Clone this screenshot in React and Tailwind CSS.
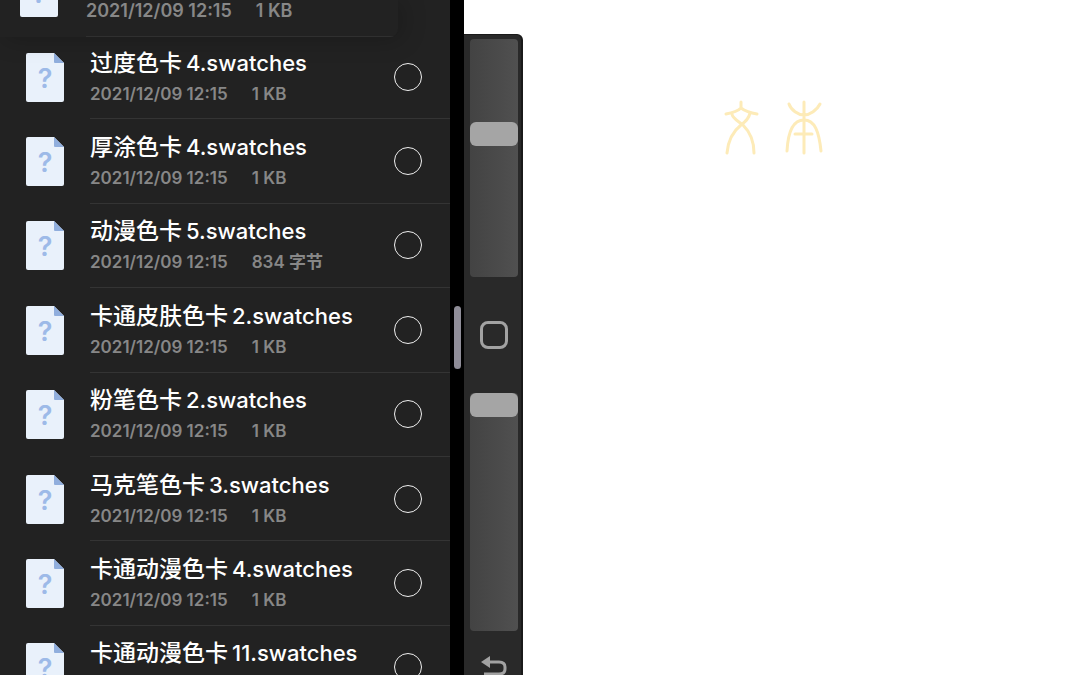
import React, { useState } from 'react'

const files = [
    { id: 1, name: '过度色卡', rest: '4.swatches', size: '1 KB' },
    { id: 2, name: '厚涂色卡', rest: '4.swatches', size: '1 KB' },
    { id: 3, name: '动漫色卡', rest: '5.swatches', size: '834 字节' },
    { id: 4, name: '卡通皮肤色卡', rest: '2.swatches', size: '1 KB' },
    { id: 5, name: '粉笔色卡', rest: '2.swatches', size: '1 KB' },
    { id: 6, name: '马克笔色卡', rest: '3.swatches', size: '1 KB' },
    { id: 7, name: '卡通动漫色卡', rest: '4.swatches', size: '1 KB' },
    { id: 8, name: '卡通动漫色卡', rest: '11.swatches', size: '1 KB' },
]

const FileIcon = () => (
    <div className="relative grid h-[49px] w-[38px] shrink-0 place-items-center">
        <svg viewBox="0 0 38 49" className="absolute inset-0 h-full w-full" aria-hidden="true">
            <path d="M2 0H28L38 10V47Q38 49 36 49H2Q0 49 0 47V2Q0 0 2 0Z" fill="#e9f1fb" />
            <path d="M28 0L38 10H29Q28 10 28 9Z" fill="#90aedd" />
        </svg>
        <span className="relative pt-0.5 text-[27px] leading-none font-semibold text-[#9dbae8]">?</span>
    </div>
)

const FileRow = ({ file }) => {
    const [checked, setChecked] = useState(false)

    return (
        <li className="flex min-h-0 items-center gap-[26px] pl-[26px]">
            <FileIcon />
            <div className="flex h-full min-w-0 flex-1 items-center justify-between border-b border-[#343434] pr-7">
                <label htmlFor={`file-${file.id}`} className="pt-1 whitespace-nowrap">
                    <span className="flex items-baseline gap-1 text-[22px] leading-[31px] font-medium text-white">
                        <span className="text-[23px]">{file.name}</span>
                        <span>{file.rest}</span>
                    </span>
                    <span className="flex gap-6 text-[17px] leading-[31px] font-semibold text-[#878787]">
                        <span>2021/12/09 12:15</span>
                        <span>{file.size}</span>
                    </span>
                </label>
                <input
                    id={`file-${file.id}`}
                    type="checkbox"
                    checked={checked}
                    onChange={() => setChecked(!checked)}
                    className="h-7 w-7 shrink-0 appearance-none rounded-full border border-[#f0f0f0] checked:bg-blue-500"
                />
            </div>
        </li>
    )
}

// the row that is being dragged, lifted over the list
const DraggedRow = () => (
    <div className="absolute top-0 left-0 flex h-[37px] w-[398px] items-end overflow-hidden rounded-br-lg bg-[#222222] pl-5 shadow-[4px_2px_24px_rgba(0,0,0,0.22)]">
        <div className="mr-7 mb-5">
            <FileIcon />
        </div>
        <div className="flex flex-1 gap-6 border-b border-[#303030] pb-2.5 text-[18px] leading-[30px] font-semibold text-[#878787]">
            <span>2021/12/09 12:15</span>
            <span>1 KB</span>
        </div>
    </div>
)

const Slider = ({ label, start }) => {
    const [value, setValue] = useState(start)

    return (
        <input
            type="range"
            aria-label={label}
            min="0"
            max="100"
            value={value}
            onChange={(e) => setValue(e.target.value)}
            className="h-[238px] w-12 shrink-0 appearance-none rounded bg-linear-to-r from-[#434343] to-[#505050] [direction:rtl] [writing-mode:vertical-lr] [&::-webkit-slider-thumb]:h-6 [&::-webkit-slider-thumb]:w-12 [&::-webkit-slider-thumb]:appearance-none [&::-webkit-slider-thumb]:rounded-md [&::-webkit-slider-thumb]:bg-[#a5a5a5]"
        />
    )
}

const Toolbar = () => (
    <aside className="mt-[34px] flex w-[59px] shrink-0 flex-col items-center rounded-tr-md border-t border-r-2 border-[#1a1a1a] bg-[#292929] pt-1 pl-0.5">
        <Slider label="画笔尺寸" start={61} />
        <button aria-label="修改" className="my-11 h-7 w-7 shrink-0 rounded-lg border-3 border-[#a2a2a2]"></button>
        <Slider label="不透明度" start={100} />
        <button aria-label="撤销" className="mt-6 shrink-0">
            <svg width="26" height="24" viewBox="0 0 26 24" fill="none">
                <path d="M8 7H18Q24 7 24 12V14Q24 19 18 19H3" stroke="#a2a2a2" strokeWidth="3" />
                <path d="M0 7L9 1V13Z" fill="#a2a2a2" />
            </svg>
        </button>
    </aside>
)

const Canvas = () => (
    <main className="min-w-0 flex-1 bg-white pt-[100px] pl-[200px]">
        <svg width="102" height="56" viewBox="0 0 102 56" fill="none" stroke="#fdebb8" strokeWidth="3" strokeLinecap="round" role="img" aria-label="文本">
            <path d="M18 2V8C15 11 9 13 3 14M18 8C22 11 28 13 34 14" />
            <path d="M9 14C9 18 15 21 20 25C28 33 31 42 31 53" />
            <path d="M27 13C26 19 22 22 18 25C9 32 5 42 4 53" />
            <path d="M81 2V53M66 4C68 10 75 15 81 15C87 15 94 10 97 4" />
            <path d="M64 51C65 32 70 20 81 20C92 20 96 32 98 51M72 34H89" />
        </svg>
    </main>
)

const App = () => {
    return (
        <div className="flex h-screen overflow-hidden bg-white font-[Inter,'Noto_Sans_CJK_SC',sans-serif]">
            <section className="relative w-5/12 shrink-0 overflow-hidden bg-[#222222] pt-[35px]">
                <ul className="grid h-screen grid-rows-8">
                    {files.map((file) => (
                        <FileRow key={file.id} file={file} />
                    ))}
                </ul>
                <DraggedRow />
            </section>

            <div className="flex w-3.5 shrink-0 items-center justify-center bg-black">
                <div className="h-[63px] w-[7px] rounded-full bg-[#8f8d98]"></div>
            </div>

            <Toolbar />
            <Canvas />
        </div>
    )
}

export default App
